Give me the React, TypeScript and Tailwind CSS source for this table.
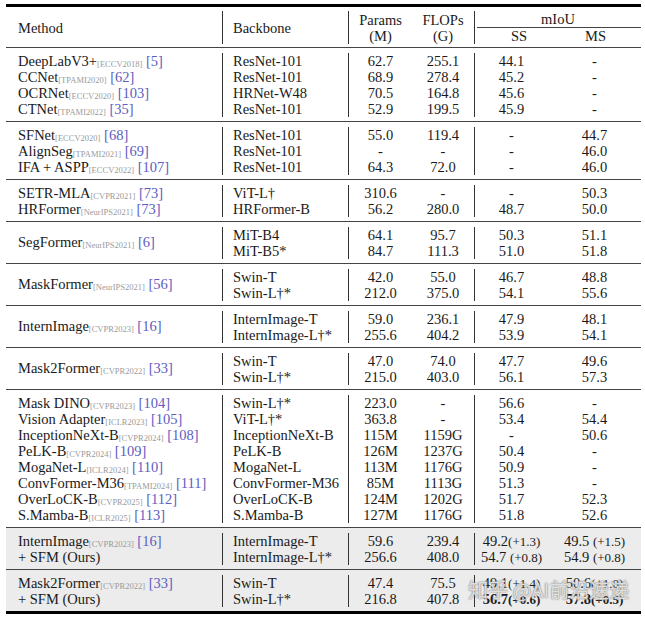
import type { ReactNode } from "react";

type Method = { name: string; venue?: string; cite?: string };
type Row = {
  method?: Method;
  backbone: string;
  params: string;
  flops: string;
  ss: ReactNode;
  ms: ReactNode;
};
type Group = { rows: Row[]; merged?: Method; gray?: boolean };

const cols = "grid grid-cols-[216px_126px_64px_62px_74px_93px]";

function Delta({ v, d, bold }: { v: string; d: string; bold?: boolean }) {
  return (
    <span className={bold ? "font-bold" : ""}>
      {v}
      <span className="text-[13px]">{d}</span>
    </span>
  );
}

const groups: Group[] = [
  {
    rows: [
      { method: { name: "DeepLabV3+", venue: "[ECCV2018]", cite: "5" }, backbone: "ResNet-101", params: "62.7", flops: "255.1", ss: "44.1", ms: "-" },
      { method: { name: "CCNet", venue: "[TPAMI2020]", cite: "62" }, backbone: "ResNet-101", params: "68.9", flops: "278.4", ss: "45.2", ms: "-" },
      { method: { name: "OCRNet", venue: "[ECCV2020]", cite: "103" }, backbone: "HRNet-W48", params: "70.5", flops: "164.8", ss: "45.6", ms: "-" },
      { method: { name: "CTNet", venue: "[TPAMI2022]", cite: "35" }, backbone: "ResNet-101", params: "52.9", flops: "199.5", ss: "45.9", ms: "-" },
    ],
  },
  {
    rows: [
      { method: { name: "SFNet", venue: "[ECCV2020]", cite: "68" }, backbone: "ResNet-101", params: "55.0", flops: "119.4", ss: "-", ms: "44.7" },
      { method: { name: "AlignSeg", venue: "[TPAMI2021]", cite: "69" }, backbone: "ResNet-101", params: "-", flops: "-", ss: "-", ms: "46.0" },
      { method: { name: "IFA + ASPP", venue: "[ECCV2022]", cite: "107" }, backbone: "ResNet-101", params: "64.3", flops: "72.0", ss: "-", ms: "46.0" },
    ],
  },
  {
    rows: [
      { method: { name: "SETR-MLA", venue: "[CVPR2021]", cite: "73" }, backbone: "ViT-L†", params: "310.6", flops: "-", ss: "-", ms: "50.3" },
      { method: { name: "HRFormer", venue: "[NeurIPS2021]", cite: "73" }, backbone: "HRFormer-B", params: "56.2", flops: "280.0", ss: "48.7", ms: "50.0" },
    ],
  },
  {
    merged: { name: "SegFormer", venue: "[NeurIPS2021]", cite: "6" },
    rows: [
      { backbone: "MiT-B4", params: "64.1", flops: "95.7", ss: "50.3", ms: "51.1" },
      { backbone: "MiT-B5*", params: "84.7", flops: "111.3", ss: "51.0", ms: "51.8" },
    ],
  },
  {
    merged: { name: "MaskFormer", venue: "[NeurIPS2021]", cite: "56" },
    rows: [
      { backbone: "Swin-T", params: "42.0", flops: "55.0", ss: "46.7", ms: "48.8" },
      { backbone: "Swin-L†*", params: "212.0", flops: "375.0", ss: "54.1", ms: "55.6" },
    ],
  },
  {
    merged: { name: "InternImage", venue: "[CVPR2023]", cite: "16" },
    rows: [
      { backbone: "InternImage-T", params: "59.0", flops: "236.1", ss: "47.9", ms: "48.1" },
      { backbone: "InternImage-L†*", params: "255.6", flops: "404.2", ss: "53.9", ms: "54.1" },
    ],
  },
  {
    merged: { name: "Mask2Former", venue: "[CVPR2022]", cite: "33" },
    rows: [
      { backbone: "Swin-T", params: "47.0", flops: "74.0", ss: "47.7", ms: "49.6" },
      { backbone: "Swin-L†*", params: "215.0", flops: "403.0", ss: "56.1", ms: "57.3" },
    ],
  },
  {
    rows: [
      { method: { name: "Mask DINO", venue: "[CVPR2023]", cite: "104" }, backbone: "Swin-L†*", params: "223.0", flops: "-", ss: "56.6", ms: "-" },
      { method: { name: "Vision Adapter", venue: "[ICLR2023]", cite: "105" }, backbone: "ViT-L†*", params: "363.8", flops: "-", ss: "53.4", ms: "54.4" },
      { method: { name: "InceptionNeXt-B", venue: "[CVPR2024]", cite: "108" }, backbone: "InceptionNeXt-B", params: "115M", flops: "1159G", ss: "-", ms: "50.6" },
      { method: { name: "PeLK-B", venue: "[CVPR2024]", cite: "109" }, backbone: "PeLK-B", params: "126M", flops: "1237G", ss: "50.4", ms: "-" },
      { method: { name: "MogaNet-L", venue: "[ICLR2024]", cite: "110" }, backbone: "MogaNet-L", params: "113M", flops: "1176G", ss: "50.9", ms: "-" },
      { method: { name: "ConvFormer-M36", venue: "[TPAMI2024]", cite: "111" }, backbone: "ConvFormer-M36", params: "85M", flops: "1113G", ss: "51.3", ms: "-" },
      { method: { name: "OverLoCK-B", venue: "[CVPR2025]", cite: "112" }, backbone: "OverLoCK-B", params: "124M", flops: "1202G", ss: "51.7", ms: "52.3" },
      { method: { name: "S.Mamba-B", venue: "[ICLR2025]", cite: "113" }, backbone: "S.Mamba-B", params: "127M", flops: "1176G", ss: "51.8", ms: "52.6" },
    ],
  },
  {
    gray: true,
    rows: [
      { method: { name: "InternImage", venue: "[CVPR2023]", cite: "16" }, backbone: "InternImage-T", params: "59.6", flops: "239.4", ss: <Delta v="49.2" d="(+1.3)" />, ms: <Delta v="49.5 " d="(+1.5)" /> },
      { method: { name: "+ SFM (Ours)" }, backbone: "InternImage-L†*", params: "256.6", flops: "408.0", ss: <Delta v="54.7 " d="(+0.8)" />, ms: <Delta v="54.9 " d="(+0.8)" /> },
    ],
  },
  {
    gray: true,
    rows: [
      { method: { name: "Mask2Former", venue: "[CVPR2022]", cite: "33" }, backbone: "Swin-T", params: "47.4", flops: "75.5", ss: <Delta v="49.1" d="(+1.4)" />, ms: <Delta v="50.6" d="(+1.0)" /> },
      { method: { name: "+ SFM (Ours)" }, backbone: "Swin-L†*", params: "216.8", flops: "407.8", ss: <Delta v="56.7" d="(+0.6)" bold />, ms: <Delta v="57.8" d="(+0.5)" bold /> },
    ],
  },
];

function MethodName({ m }: { m: Method }) {
  return (
    <span className="whitespace-nowrap">
      {m.name}
      {m.venue && (
        <span className="text-[8.5px] text-[#9a9a9a] align-[-1px]">{m.venue}</span>
      )}
      {m.cite && <span className="text-[#5d5dc2]"> [{m.cite}]</span>}
    </span>
  );
}

function GroupBlock({ g }: { g: Group }) {
  return (
    <div className={`border-t border-[#444] pt-[5px] pb-[4px] ${g.gray ? "bg-[#ececec]" : ""}`}>
      <div className={`${cols} auto-rows-[16px] leading-[16px]`}>
        {g.rows.map((r, i) => (
          <div key={i} className="contents">
            {g.merged ? (
              i === 0 && (
                <div className="row-span-2 flex items-center pl-3">
                  <MethodName m={g.merged} />
                </div>
              )
            ) : (
              <div className="pl-3">{r.method && <MethodName m={r.method} />}</div>
            )}
            <div className="border-l border-[#333] pl-[10px] whitespace-nowrap">{r.backbone}</div>
            <div className="border-l border-[#333] text-center">{r.params}</div>
            <div className="text-center">{r.flops}</div>
            <div className="border-l border-[#333] text-center whitespace-nowrap">{r.ss}</div>
            <div className="text-center whitespace-nowrap">{r.ms}</div>
          </div>
        ))}
      </div>
    </div>
  );
}

export default function App() {
  return (
    <div className="relative w-[645px] h-[620px] bg-white overflow-hidden font-['Liberation_Serif',serif] text-[14.5px] text-[#1a1a1a]">
      <div className="ml-[6px] w-[635px] pt-[4px]">
        <div className="h-[3px] bg-black" />
        {/* header */}
        <div className="pt-[4px] pb-[3px] h-[40px]">
          <div className={`${cols} h-[33px] leading-[16px]`}>
            <div className="flex items-center pl-3">Method</div>
            <div className="flex items-center border-l border-[#333] pl-[10px]">Backbone</div>
            <div className="flex flex-col items-center justify-center border-l border-[#333]">
              <span>Params</span>
              <span>(M)</span>
            </div>
            <div className="flex flex-col items-center justify-center">
              <span>FLOPs</span>
              <span>(G)</span>
            </div>
            <div className="col-span-2 flex flex-col border-l border-[#333]">
              <div className="text-center">mIoU</div>
              <div className="ml-[2px] border-t border-[#444] grid grid-cols-[72px_93px]">
                <div className="text-center pl-[12px]">SS</div>
                <div className="text-center">MS</div>
              </div>
            </div>
          </div>
        </div>
        {groups.map((g, i) => (
          <GroupBlock key={i} g={g} />
        ))}
        <div className="h-[3px] bg-black" />
      </div>
      {/* watermark */}
      <div className="absolute left-[468px] top-[578px] text-[20px] leading-[24px] whitespace-nowrap font-['Noto_Sans_CJK_SC',sans-serif] text-white/75 [text-shadow:0_0_1px_#777,0_0_2px_#999]">
        知乎 @AI前沿速递
      </div>
    </div>
  );
}
